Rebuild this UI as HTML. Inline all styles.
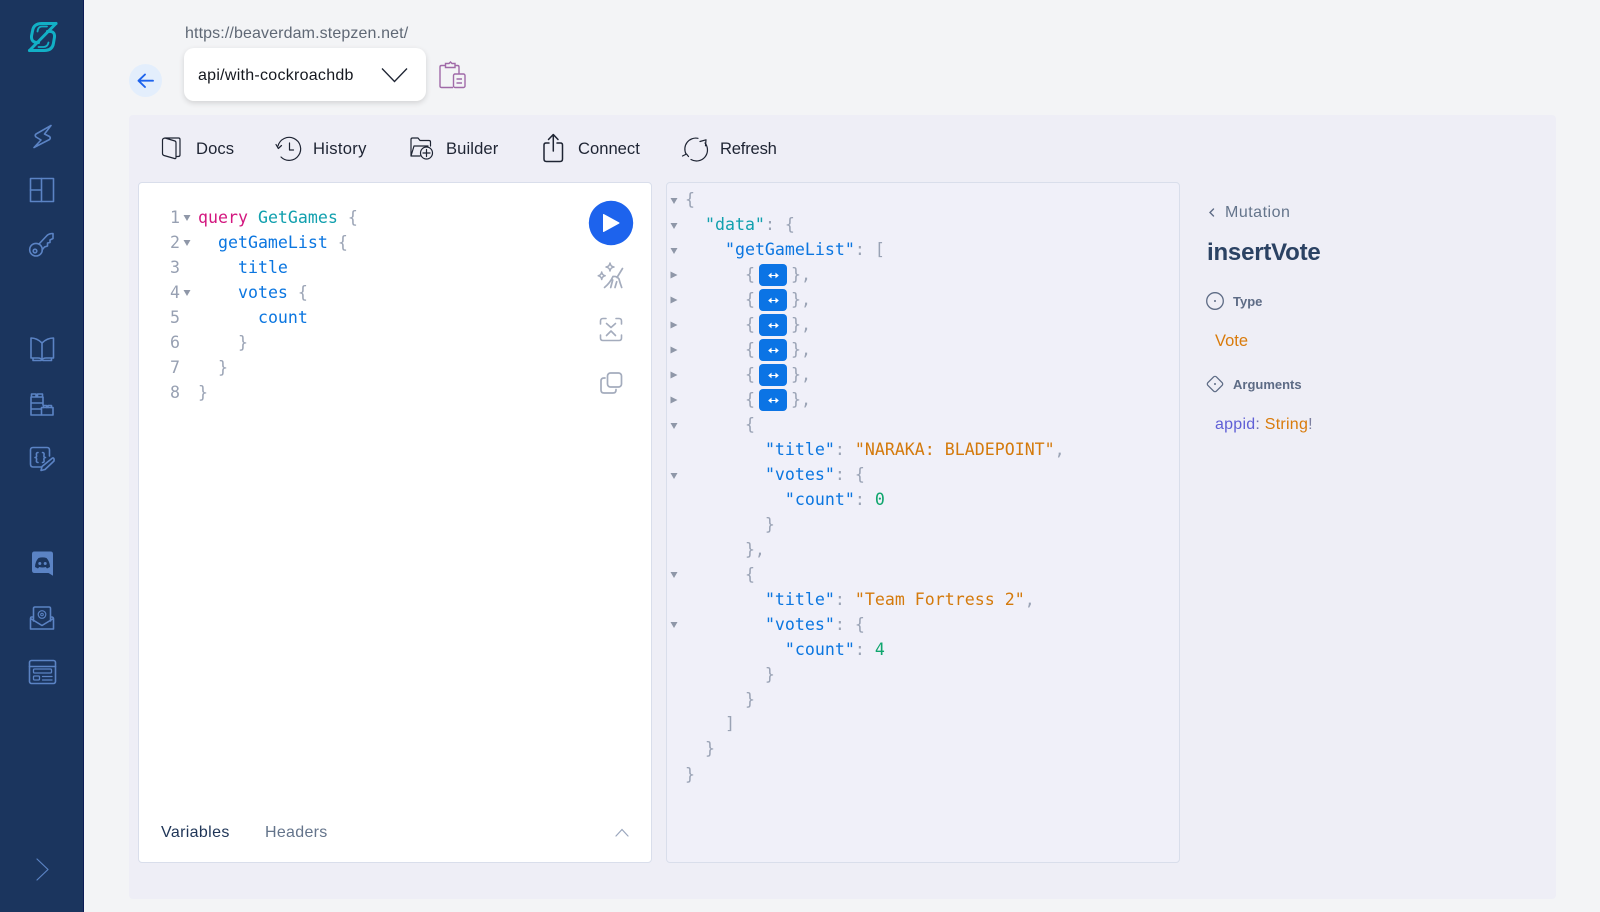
<!DOCTYPE html>
<html><head><meta charset="utf-8"><title>StepZen</title>
<style>
html,body{margin:0;padding:0;width:1600px;height:912px;overflow:hidden;background:#f3f4f6;font-family:"Liberation Sans",sans-serif}
.a{position:absolute}
.t{position:absolute;white-space:pre;line-height:20px}
.m{position:absolute;white-space:pre;line-height:25px;height:25px;font-family:"DejaVu Sans Mono","Liberation Mono",monospace;font-size:16.6px;color:#9aa3b5}
.n{color:#97a0b2}
.k{color:#d3177f}.d{color:#11a0ae}.f{color:#0b76e0}.s{color:#d47a0c}.g{color:#10a66e}
.b{position:absolute;width:28px;height:22px;border-radius:4px;background:#0b74e5}
.tb{font-size:16.6px;color:#1e2433;letter-spacing:.1px}
</style></head><body>
<div class="a" style="left:0;top:0;width:83px;height:912px;background:#1b355e;border-right:1px solid #0c1c55"></div>
<div class="a" style="left:129px;top:115px;width:1427px;height:784px;background:#eeeef6;border-radius:4px"></div>
<div class="a" style="left:138px;top:182px;height:681px;background:#fff;border:1px solid #d9deeb;border-radius:4px;box-sizing:border-box;width:514px"></div>
<div class="a" style="left:666px;top:182px;width:514px;height:681px;background:#f0f0f9;border:1px solid #d9deeb;border-radius:4px;box-sizing:border-box"></div>
<div class="t" style="left:185px;top:24px;font-size:16px;color:#5f6875;letter-spacing:.12px">https://beaverdam.stepzen.net/</div>
<div class="a" style="left:184px;top:48px;width:242px;height:53px;background:#fff;border-radius:10px;box-shadow:0 2px 6px rgba(0,0,0,.14)"></div>
<div class="t" style="left:198px;top:66px;font-size:16px;color:#15181f;letter-spacing:.27px">api/with-cockroachdb</div>
<div class="a" style="left:129px;top:64px;width:33px;height:33px;border-radius:50%;background:#e3eefc"></div>
<div class="t tb" style="left:196px;top:139px">Docs</div>
<div class="t tb" style="left:313px;top:139px;letter-spacing:.3px">History</div>
<div class="t tb" style="left:446px;top:139px">Builder</div>
<div class="t tb" style="left:578px;top:139px;letter-spacing:0">Connect</div>
<div class="t tb" style="left:720px;top:139px;letter-spacing:-.2px">Refresh</div>

<!-- line numbers -->
<div class="m n" style="left:170px;top:205px">1</div>
<div class="m n" style="left:170px;top:230px">2</div>
<div class="m n" style="left:170px;top:255px">3</div>
<div class="m n" style="left:170px;top:280px">4</div>
<div class="m n" style="left:170px;top:305px">5</div>
<div class="m n" style="left:170px;top:330px">6</div>
<div class="m n" style="left:170px;top:355px">7</div>
<div class="m n" style="left:170px;top:380px">8</div>
<!-- query -->
<div class="m" style="left:198px;top:205px"><span class="k">query</span> <span class="d">GetGames</span> {</div>
<div class="m" style="left:198px;top:230px">  <span class="f">getGameList</span> {</div>
<div class="m" style="left:198px;top:255px">    <span class="f">title</span></div>
<div class="m" style="left:198px;top:280px">    <span class="f">votes</span> {</div>
<div class="m" style="left:198px;top:305px">      <span class="f">count</span></div>
<div class="m" style="left:198px;top:330px">    }</div>
<div class="m" style="left:198px;top:355px">  }</div>
<div class="m" style="left:198px;top:380px">}</div>

<!-- result -->
<div class="m" style="left:685px;top:187px">{</div>
<div class="m" style="left:685px;top:212px">  <span class="d">"data"</span>: {</div>
<div class="m" style="left:685px;top:237px">    <span class="f">"getGameList"</span>: [</div>
<div class="m" style="left:685px;top:262px">      {</div><div class="b" style="left:759px;top:264px"></div><div class="m" style="left:791px;top:262px">},</div>
<div class="m" style="left:685px;top:287px">      {</div><div class="b" style="left:759px;top:289px"></div><div class="m" style="left:791px;top:287px">},</div>
<div class="m" style="left:685px;top:312px">      {</div><div class="b" style="left:759px;top:314px"></div><div class="m" style="left:791px;top:312px">},</div>
<div class="m" style="left:685px;top:337px">      {</div><div class="b" style="left:759px;top:339px"></div><div class="m" style="left:791px;top:337px">},</div>
<div class="m" style="left:685px;top:362px">      {</div><div class="b" style="left:759px;top:364px"></div><div class="m" style="left:791px;top:362px">},</div>
<div class="m" style="left:685px;top:387px">      {</div><div class="b" style="left:759px;top:389px"></div><div class="m" style="left:791px;top:387px">},</div>
<div class="m" style="left:685px;top:412px">      {</div>
<div class="m" style="left:685px;top:437px">        <span class="f">"title"</span>: <span class="s">"NARAKA: BLADEPOINT"</span>,</div>
<div class="m" style="left:685px;top:462px">        <span class="f">"votes"</span>: {</div>
<div class="m" style="left:685px;top:487px">          <span class="f">"count"</span>: <span class="g">0</span></div>
<div class="m" style="left:685px;top:512px">        }</div>
<div class="m" style="left:685px;top:537px">      },</div>
<div class="m" style="left:685px;top:562px">      {</div>
<div class="m" style="left:685px;top:587px">        <span class="f">"title"</span>: <span class="s">"Team Fortress 2"</span>,</div>
<div class="m" style="left:685px;top:612px">        <span class="f">"votes"</span>: {</div>
<div class="m" style="left:685px;top:637px">          <span class="f">"count"</span>: <span class="g">4</span></div>
<div class="m" style="left:685px;top:662px">        }</div>
<div class="m" style="left:685px;top:687px">      }</div>
<div class="m" style="left:685px;top:711px">    ]</div>
<div class="m" style="left:685px;top:736px">  }</div>
<div class="m" style="left:685px;top:762px">}</div>

<!-- tabs -->
<div class="t" style="left:161px;top:823px;font-size:16px;color:#1f3557;letter-spacing:.35px">Variables</div>
<div class="t" style="left:265px;top:823px;font-size:16px;color:#64748b;letter-spacing:.3px">Headers</div>

<!-- docs -->
<div class="t" style="left:1225px;top:203px;font-size:16px;color:#64748b;letter-spacing:.5px">Mutation</div>
<div class="t" style="left:1207px;top:243px;font-size:24px;font-weight:700;color:#2b4263;letter-spacing:-.2px">insertVote</div>
<div class="t" style="left:1233px;top:292px;font-size:13px;font-weight:700;color:#5d6b85">Type</div>
<div class="t" style="left:1215px;top:331px;font-size:16.5px;color:#d97b0b">Vote</div>
<div class="t" style="left:1233px;top:375px;font-size:13px;font-weight:700;color:#5d6b85">Arguments</div>
<div class="t" style="left:1215px;top:415px;font-size:16px;color:#5f5fd6;letter-spacing:.25px">appid<span style="color:#6d6fb0">: </span><span style="color:#d97b0b">String</span><span style="color:#7c7fa0">!</span></div>

<svg class="a" style="left:0;top:0" width="1600" height="912" viewBox="0 0 1600 912" fill="none">
<!-- logo -->
<g stroke="#12b0c6" stroke-width="3" stroke-linejoin="round" stroke-linecap="round">
<path d="M56 23.500H42Q33.500 23.500 32.500 31L31.500 36Q31 43 38.500 42.500"/>
<path d="M29.500 50.500H44Q52.500 50.500 53.500 43L54.500 37Q55 30.500 47.500 31.500"/>
<path d="M56 23.500 29.500 50.500"/>
<path d="M47 26.500H42Q38 26.500 37.500 31.500" stroke-width="1.800"/>
<path d="M38.500 47H43.500Q47.500 47 48.500 42.500" stroke-width="1.800"/>
</g>
<!-- sidebar icons -->
<g stroke="#5b83c4" stroke-width="1.600" stroke-linejoin="round" stroke-linecap="round">
<path d="M51 125.500 36 134Q34.500 135.500 36 137L41 140 34 147.500 49.500 139.500Q51 138 49.500 136.500L44.500 134Z"/>
<rect x="30.500" y="178.500" width="23" height="23"/><path d="M41.500 178.500V201.500M30.500 190H41.500"/>
<circle cx="36" cy="249.700" r="6.300"/><circle cx="35" cy="251" r="1.800"/>
<path d="M39 244 47 235.500Q49 233.500 53 233.500V238.500L50 240V242.500L47.500 243V246L44.500 247 42 250"/>
<path d="M42 343Q37 338 31 338V358H38Q41 358 42 360 43 358 46 358H53.500V338Q47 338 42 343ZM42 343V360M33 358V360.500H41M51.500 358V360.500H43"/>
<path d="M31 403H43M31 409H41M31 397V415H41M43 397V405M31 397H43M31.500 397V394H36V397M37.500 397V394H42.500V397"/>
<rect x="41.500" y="407.500" width="11.500" height="7.500"/><path d="M43.500 407.500V405.500H46.500V407.500M48 407.500V405.500H51.500V407.500"/>
<path d="M49.500 456V450Q49.500 447.500 47 447.500H33Q30.500 447.500 30.500 450V464Q30.500 467 33 467H41"/>
<path d="M38 452.500Q36 452.500 36.500 455 37 457.500 35 457.500 37 457.500 36.500 460 36 462.500 38 462.500M42.500 452.500Q44.500 452.500 44 455 43.500 457.500 45.500 457.500 43.500 457.500 44 460 44.500 462.500 42.500 462.500"/>
<path d="M52.500 458 42 466.500 41 470.500 45 469.500 54 461Q54.500 457.500 52.500 458Z"/>
<path d="M33.500 617H31.500Q30.500 617 30.500 619V629H53.500V619Q53.500 617 51.500 617H50.500M30.500 618.500 42 625.500 53.500 618.500M33.500 621V608.500Q33.500 607 35 607H49Q50.500 607 50.500 608.500V621"/>
<circle cx="42" cy="614.500" r="3.800" stroke-width="1.200"/><circle cx="42" cy="614.500" r="1.300" stroke-width="1"/>
<rect x="29.500" y="660.500" width="26" height="23" rx="2"/><path d="M29.500 666.500H55.500"/><rect x="33.500" y="669" width="18" height="4" rx="1" stroke-width="1.300"/><rect x="33.500" y="676" width="6" height="4" rx="1" stroke-width="1.300"/><path d="M42.500 676.500H52M42.500 680H52" stroke-width="1.300"/>
<path d="M37 859 48 869.500 37 880" stroke-width="1.200"/>
</g>
<!-- discord -->
<path d="M34.500 551.500H50.500Q53 551.500 53 554V575.700L48.500 573H34.500Q32 573 32 570.500V554Q32 551.500 34.500 551.500Z" fill="#5b83c4"/>
<path d="M38.500 558Q42.500 556.700 46.500 558 49.800 561.500 50 567L47 568.500 45.800 567Q42.500 568 39.200 567L38 568.500 35 567Q35.200 561.500 38.500 558Z" fill="#1b355e"/>
<circle cx="39.800" cy="563.500" r="1.500" fill="#5b83c4"/><circle cx="45.200" cy="563.500" r="1.500" fill="#5b83c4"/>
<!-- back arrow -->
<path d="M153 80.700H138.500M145 74.500 138.500 80.700 145 87" stroke="#1d63ed" stroke-width="1.900" stroke-linecap="round" stroke-linejoin="round"/>
<!-- select chevron -->
<path d="M382 68.500 394.500 81.500 407 68.500" stroke="#1e2433" stroke-width="1.300"/>
<!-- clipboard -->
<g stroke="#a06aa8" stroke-width="1.400">
<path d="M453 87.500H441.500Q440 87.500 440 86V67Q440 65.500 441.500 65.500H445.500V67.500H455V65.500H457.500Q459 65.500 459 67V74M445.500 65.500V63.500H449L450.500 62 452 63.500H455V65.500"/>
<rect x="453.500" y="74" width="11.500" height="13.500" rx="1.500"/><path d="M456.500 79H462M456.500 83H462"/>
</g>
<!-- toolbar icons -->
<g stroke="#1e2433" stroke-width="1.200" stroke-linecap="round" stroke-linejoin="round">
<path d="M165 138H178.500Q180 138 180 139.500V155Q180 156.500 178 156.500H176M162.500 140Q162.500 138.500 165 138L175 141Q176 141.300 176 143V157.500Q176 159 174.500 158.500L164 155.500Q162.500 155 162.500 153.500Z"/>
<path d="M278 146A11.500 11.500 0 1 1 281 157M276 144.500 278.300 148.500 281.500 145.500M289.500 143V150H293.500"/>
<path d="M411 156V139.500Q411 138 412.500 138H418L420 140.500H429Q430.500 140.500 430.500 142V146M414 146H428M414 146 411 156H420"/>
<circle cx="426.500" cy="153" r="6"/><path d="M426.500 149.500V156.500M423 153H430"/>
<path d="M549 143H546Q544 143 544 145V159Q544 161.500 546.500 161.500H560Q562.500 161.500 562.500 159V145Q562.500 143 560.500 143H557M553.300 151V135M548.500 139.500 553.300 134.500 558 139.500" stroke-width="1.500"/>
<path d="M686 154A11 11 0 0 1 698 138.300M705 143A11 11 0 0 1 691 159.500"/>
<path d="M682.500 156 686.500 154 688.500 156.500M700 141.500 706 139.800 705.500 145.800"/>
</g>
<!-- play -->
<circle cx="611" cy="223" r="22.200" fill="#1d63ed"/><path d="M603.500 214.500V231.500L619 223Z" fill="#fff" stroke="#fff" stroke-linejoin="round"/>
<!-- editor tools -->
<g stroke="#a4acbd" stroke-width="1.700" stroke-linecap="round" stroke-linejoin="round">
<path d="M622.500 268.500 617 277.500M613 276.500Q617 276 619 279 Q620 283 621.700 287.500M613 276.500Q610 283 604.500 287.500M612.700 280 610.700 287.500M616.700 281.700 615 287.500"/>
<path d="M610 263Q610.500 266.500 614 267 610.500 267.500 610 271 609.500 267.500 606 267 609.500 266.500 610 263ZM601.700 272Q602.200 275.300 605.200 275.700 602.200 276.100 601.700 279.500 601.200 276.100 598.200 275.700 601.200 275.300 601.700 272Z" stroke-width="1.500"/>
<path d="M600.500 324V321Q600.500 318.500 603 318.500H606M616 318.500H619Q621.500 318.500 621.500 321V324M621.500 335V338Q621.500 340.500 619 340.500H603Q600.500 340.500 600.500 338V335M606.500 323.500 611 327.500 615.500 323.500M606.500 335.500 611 331 615.500 335.500" stroke-width="1.600"/>
<rect x="607.500" y="373" width="14" height="14" rx="3"/><path d="M605 378H604Q601 378 601 381V390Q601 393 604 393H613Q616 393 616 390V389.500"/>
</g>
<!-- fold arrows -->
<g fill="#8f97a8">
<path d="M183.500 215H190.500L187 221ZM183.500 240H190.500L187 246ZM183.500 290H190.500L187 296Z"/>
<path d="M670.500 198H677.500L674 204ZM670.500 223H677.500L674 229ZM670.500 248H677.500L674 254ZM670.500 423H677.500L674 429ZM670.500 473H677.500L674 479ZM670.500 572H677.500L674 578ZM670.500 622H677.500L674 628Z"/>
<path d="M670.500 271.500V278.500L677.500 275ZM670.500 296.500V303.500L677.500 300ZM670.500 321.500V328.500L677.500 325ZM670.500 346.500V353.500L677.500 350ZM670.500 371.500V378.500L677.500 375ZM670.500 396.500V403.500L677.500 400Z"/>
</g>
<!-- badge arrows -->
<g stroke="#fff" stroke-width="1.100" fill="#fff">
<path d="M769 275.500H778M771 273.800 769 275.500 771 277.200ZM776 273.800 778 275.500 776 277.200Z"/>
<path d="M769 300.500H778M771 298.800 769 300.500 771 302.200ZM776 298.800 778 300.500 776 302.200Z"/>
<path d="M769 325.500H778M771 323.800 769 325.500 771 327.200ZM776 323.800 778 325.500 776 327.200Z"/>
<path d="M769 350.500H778M771 348.800 769 350.500 771 352.200ZM776 348.800 778 350.500 776 352.200Z"/>
<path d="M769 375.500H778M771 373.800 769 375.500 771 377.200ZM776 373.800 778 375.500 776 377.200Z"/>
<path d="M769 400.500H778M771 398.800 769 400.500 771 402.200ZM776 398.800 778 400.500 776 402.200Z"/>
</g>
<!-- chevron up -->
<path d="M616 836 622 829.500 628 836" stroke="#9aa6bd" stroke-width="1.200" stroke-linecap="round"/>
<!-- docs icons -->
<path d="M1213.500 209 1210 212.500 1213.500 216" stroke="#5d6b85" stroke-width="1.400" stroke-linecap="round"/>
<circle cx="1215" cy="301" r="8.300" stroke="#5d6b85" stroke-width="1.300"/><circle cx="1215" cy="301" r="1" fill="#5d6b85"/>
<rect x="1209" y="378" width="12" height="12" rx="2" transform="rotate(45 1215 384)" stroke="#5d6b85" stroke-width="1.300"/><circle cx="1215" cy="384" r="1" fill="#5d6b85"/>
</svg>
</body></html>
